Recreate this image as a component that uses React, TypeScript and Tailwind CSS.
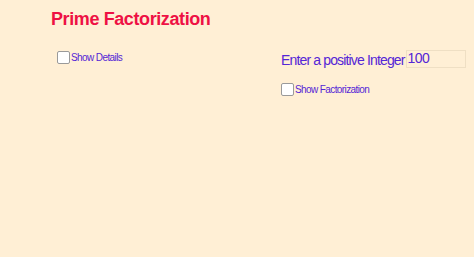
const Checkbox = ({ label }: { label: string }) => {
  return (
    <label className="flex items-center">
      <input
        type="checkbox"
        className="appearance-none w-[13px] h-[13px] border border-[#9a9a9a] rounded-[2px] bg-white m-0"
      />
      <span className="ml-[1px] text-[10px] leading-[13px] tracking-[-0.6px] text-[#5526D6]">{label}</span>
    </label>
  )
}

const App = () => {
  return (
    <div className="w-[474px] h-[257px] bg-[#FFEFD5] font-['Liberation_Sans',Arial,sans-serif] overflow-hidden">
      <h1 className="pl-[51px] pt-[8px] text-[18px] leading-[22px] font-bold tracking-[-0.4px] text-[#EE1144]">
        Prime Factorization
      </h1>

      <div className="flex mt-[18px]">
        <div className="w-[281px] pl-[57px] pt-[3px]">
          <Checkbox label="Show Details" />
        </div>

        <div className="flex flex-col">
          <div className="flex items-center h-[18px]">
            <span className="text-[14px] tracking-[-0.85px] text-[#5526D6] leading-[18px] mt-[5px]">
              Enter a positive Integer
            </span>
            <input
              type="text"
              readOnly
              value="100"
              className="ml-[1px] w-[60px] h-[18px] border border-[#EFDFC4] bg-transparent px-[1px] text-[14px] tracking-[-0.6px] text-[#5526D6] outline-none mt-[3px]"
            />
          </div>
          <div className="mt-[17px]">
            <Checkbox label="Show Factorization" />
          </div>
        </div>
      </div>
    </div>
  )
}

export default App
